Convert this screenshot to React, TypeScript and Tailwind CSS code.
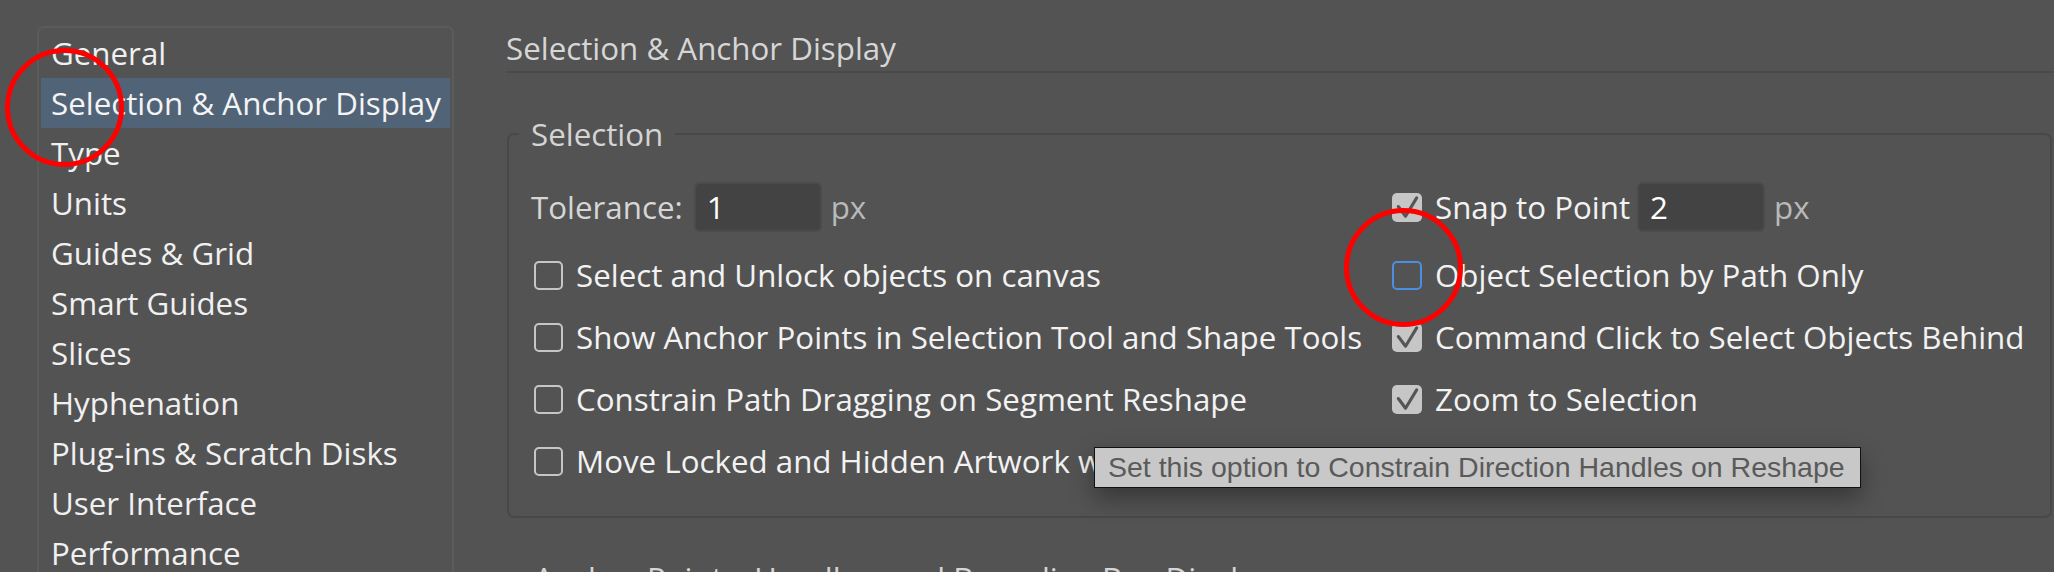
import React from 'react';

const navItems = [
  'General',
  'Selection & Anchor Display',
  'Type',
  'Units',
  'Guides & Grid',
  'Smart Guides',
  'Slices',
  'Hyphenation',
  'Plug-ins & Scratch Disks',
  'User Interface',
  'Performance',
];

const Check = () => (
  <svg viewBox="0 0 30 30" className="w-full h-full">
    <path d="M6 14 L13.5 24 L25 5" fill="none" stroke="#555555" strokeWidth="3.2" strokeLinecap="round" strokeLinejoin="round" />
  </svg>
);

const Checkbox = ({ checked = false, focus = false }: { checked?: boolean; focus?: boolean }) => {
  if (checked) {
    return (
      <span className="w-[30px] h-[29px] shrink-0 rounded-[5px] bg-[#c6c6c6] flex">
        <Check />
      </span>
    );
  }
  return (
    <span
      className={
        focus
          ? 'w-[30px] h-[29px] shrink-0 rounded-[5px] border-2 border-[#4b8fe4]'
          : 'w-[29px] h-[29px] shrink-0 rounded-[5px] border-2 border-[#c6c6c6]'
      }
    />
  );
};

const Option = ({ label, checked, focus, offset }: { label: string; checked?: boolean; focus?: boolean; offset?: boolean }) => (
  <div className={offset ? 'flex items-center gap-[13px] pl-[3px]' : 'flex items-center gap-[13px]'}>
    <Checkbox checked={checked} focus={focus} />
    <span className="text-[#f2f2f2] leading-[42px] whitespace-nowrap">{label}</span>
  </div>
);

const NumberField = ({ value }: { value: string }) => (
  <div className="w-[128px] h-[50px] rounded-[6px] bg-[#434343] border-2 border-[#4b4b4b] pl-[11px] flex items-center text-white leading-[42px]">
    {value}
  </div>
);

export default function App() {
  return (
    <div className="relative w-[2054px] h-[572px] overflow-hidden bg-[#535353] font-['Open_Sans',sans-serif] text-[31.3px]">
      <div className="flex">
        {/* Sidebar list */}
        <div className="ml-[37px] mt-[26px] w-[417px] h-[600px] shrink-0 border-2 border-b-0 border-[#5b5b5b] rounded-t-[7px] px-[2px]">
          {navItems.map((item, i) => (
            <div
              key={item}
              className={
                i === 1
                  ? 'h-[50px] pl-[10px] leading-[50px] bg-[#506377] text-[#f4f4f4] whitespace-nowrap'
                  : 'h-[50px] pl-[10px] leading-[50px] text-[#f0f0f0] whitespace-nowrap'
              }
            >
              {item}
            </div>
          ))}
        </div>

        {/* Main panel */}
        <div className="ml-[52px] flex-1 flex flex-col">
          <div className="pt-[28px] pb-[3px] leading-[40px] text-[#d6d6d6] border-b-2 border-[#4a4a4a] whitespace-nowrap">
            Selection &amp; Anchor Display
          </div>

          <fieldset className="mt-[47px] ml-[1px] mr-[2px] border-2 border-[#484848] rounded-[7px] pl-[10px] pt-[34px] pb-[24px]">
            <legend className="px-[12px] leading-[28px] text-[#d4d4d4]">Selection</legend>

            <div className="ml-[12px] flex flex-col">
              <div className="grid grid-cols-[861px_1fr] h-[50px] mb-[12px]">
                <div className="flex items-center">
                  <span className="text-[#d6d6d6] leading-[42px] mr-[11px]">Tolerance:</span>
                  <NumberField value="1" />
                  <span className="text-[#b9b9b9] leading-[42px] ml-[9px]">px</span>
                </div>
                <div className="flex items-center">
                  <Checkbox checked />
                  <span className="text-[#f2f2f2] leading-[42px] ml-[13px] mr-[7px]">Snap to Point</span>
                  <NumberField value="2" />
                  <span className="text-[#b9b9b9] leading-[42px] ml-[9px]">px</span>
                </div>
              </div>

              <div className="grid grid-cols-[861px_1fr] auto-rows-[62px] items-center">
                <Option offset label="Select and Unlock objects on canvas" />
                <Option focus label="Object Selection by Path Only" />
                <Option offset label="Show Anchor Points in Selection Tool and Shape Tools" />
                <Option checked label="Command Click to Select Objects Behind" />
                <Option offset label="Constrain Path Dragging on Segment Reshape" />
                <Option checked label="Zoom to Selection" />
                <Option offset label="Move Locked and Hidden Artwork with Anchor Point Editing" />
                <div />
              </div>
            </div>
          </fieldset>

          <div className="mt-[40px] ml-[28px] leading-[40px] text-[#d6d6d6] whitespace-nowrap">
            Anchor Points, Handles, and Bounding Box Display
          </div>
        </div>
      </div>

      {/* Tooltip */}
      <div className="absolute left-[1094px] top-[447px] h-[41px] w-[767px] bg-[#c8c8c8] border border-[#111111] pl-[13px] flex items-center font-['Liberation_Sans',Arial,sans-serif] text-[28.5px] leading-none text-[#5a5a5a] whitespace-nowrap shadow-[0_10px_24px_rgba(0,0,0,0.35)]">
        Set this option to Constrain Direction Handles on Reshape
      </div>

      {/* Red annotation circles */}
      <div className="absolute left-[5px] top-[48px] w-[119px] h-[119px] rounded-full border-[5px] border-[#ff0000]" />
      <div className="absolute left-[1344px] top-[208px] w-[119px] h-[119px] rounded-full border-[5px] border-[#ff0000]" />
    </div>
  );
}
